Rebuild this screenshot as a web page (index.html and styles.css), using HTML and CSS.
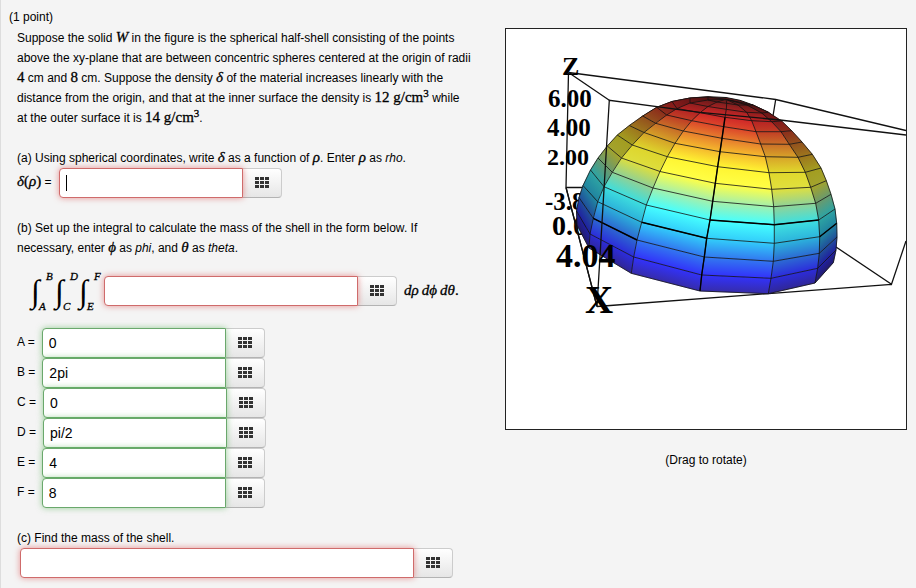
FILE: index.html
```html
<!DOCTYPE html>
<html lang="en">
  <head>
    <title>Mass of a spherical half-shell</title>
    <meta charset="utf-8">
    <link rel="stylesheet" href="styles.css">
  </head>
  <body>

  <svg class="defs" aria-hidden="true">
    <symbol id="keypad" viewBox="0 0 14 11">
      <path d="M0 0h4v3H0zM5 0h4v3H5zM10 0h4v3h-4zM0 4h4v3H0zM5 4h4v3H5zM10 4h4v3h-4zM0 8h4v3H0zM5 8h4v3H5zM10 8h4v3h-4z"/>
    </symbol>
  </svg>

  <form class="problem">
    <div class="points">(1 point)</div>

    <div class="columns">
      <div class="statement">
        <p>Suppose the solid <i class="math">W</i> in the figure is the spherical half-shell consisting of the points above the xy-plane that are between concentric spheres centered at the origin of radii <span class="math">4</span> cm and <span class="math">8</span> cm. Suppose the density <i class="math">δ</i> of the material increases linearly with the distance from the origin, and that at the inner surface the density is <span class="math">12 g/cm<sup>3</sup></span> while at the outer surface it is <span class="math">14 g/cm<sup>3</sup></span>.</p>

        <p>(a) Using spherical coordinates, write <i class="math">δ</i> as a function of <i class="math">ρ</i>. Enter <i class="math">ρ</i> as <em>rho</em>.</p>
        <div class="answer">
          <label for="density"><span class="math"><i>δ</i>(<i>ρ</i>)</span> =</label>
          <input class="wrong caret" id="density" type="text"><button type="button" aria-label="Equation editor"><svg class="icon"><use href="#keypad"/></svg></button>
        </div>

        <p>(b) Set up the integral to calculate the mass of the shell in the form below. If necessary, enter <i class="math">ϕ</i> as <em>phi</em>, and <i class="math">θ</i> as <em>theta</em>.</p>
        <div class="answer integral">
          <label for="integrand">
            <span class="int">∫</span><span class="limits"><i>B</i><i>A</i></span>
            <span class="int">∫</span><span class="limits"><i>D</i><i>C</i></span>
            <span class="int">∫</span><span class="limits"><i>F</i><i>E</i></span>
          </label>
          <input class="wrong medium" id="integrand" type="text"><button type="button" aria-label="Equation editor"><svg class="icon"><use href="#keypad"/></svg></button>
          <span class="math measure"><i>dρ</i>&thinsp;<i>dϕ</i>&thinsp;<i>dθ</i>.</span>
        </div>

        <div class="bounds">
          <div class="answer"><label for="a">A =</label><input class="right" id="a" type="text" value="0"><button type="button" aria-label="Equation editor"><svg class="icon"><use href="#keypad"/></svg></button></div>
          <div class="answer"><label for="b">B =</label><input class="right" id="b" type="text" value="2pi"><button type="button" aria-label="Equation editor"><svg class="icon"><use href="#keypad"/></svg></button></div>
          <div class="answer"><label for="c">C =</label><input class="right" id="c" type="text" value="0"><button type="button" aria-label="Equation editor"><svg class="icon"><use href="#keypad"/></svg></button></div>
          <div class="answer"><label for="d">D =</label><input class="right" id="d" type="text" value="pi/2"><button type="button" aria-label="Equation editor"><svg class="icon"><use href="#keypad"/></svg></button></div>
          <div class="answer"><label for="e">E =</label><input class="right" id="e" type="text" value="4"><button type="button" aria-label="Equation editor"><svg class="icon"><use href="#keypad"/></svg></button></div>
          <div class="answer"><label for="f">F =</label><input class="right" id="f" type="text" value="8"><button type="button" aria-label="Equation editor"><svg class="icon"><use href="#keypad"/></svg></button></div>
        </div>

        <p><label for="mass">(c) Find the mass of the shell.</label></p>
        <div class="answer total">
          <input class="wrong long" id="mass" type="text"><button type="button" aria-label="Equation editor"><svg class="icon"><use href="#keypad"/></svg></button>
        </div>
      </div>

      <div class="figure">
        <svg class="graph" viewBox="506 29 400 400">
          <!-- far edges of the box -->
          <path class="edge" d="M568.5 72.5L775.7 99.5L906 130.5M775.7 99.5L773 116M568.5 72.5L609.3 100.3M568.5 72.5L566 187.5L597 306.5M566 187.5H584M836 247L891.5 284.3L906 241M597 306.5L891.5 284.3"/>
          <text x="562" y="75" font-size="26">Z</text>
          <text x="548" y="107" font-size="25">6.00</text>
          <text x="547" y="136" font-size="25">4.00</text>
          <text x="547" y="165" font-size="24">2.00</text>
          <text x="545" y="210" font-size="25">-3.80</text>
          <text x="552" y="235" font-size="28">0.00</text>
          <path d="M640 118L657 107.3L672 101.5L690 98L708 96.7L726 97.5L740 100.3L753 105L768 112L780 121Z" fill="#65181a" stroke="#111"/>
          <g id="dome"></g>
          <path class="edge" d="M597 306.5L609.3 100.3L700 112.3L780 120L906 135M566 187.5L597 306.5"/>
          <text x="556" y="267" font-size="34">4.04</text>
          <text x="585" y="313" font-size="39">X</text>
        </svg>
        <div class="hint">(Drag to rotate)</div>
      </div>
    </div>
  </form>

  <script src="dome.js"></script>
  </body>
</html>
```
FILE: styles.css
```css
body {
  margin: 0;
  background: #f4f4f4;
  color: #000;
  font: 12px/20px "Liberation Sans", Arial, sans-serif;
}

.defs {
  display: none;
}

.problem {
  border-left: 1px solid #ddd;
  padding: 8px 9px 10px 8px;
}

.points {
  height: 20px;
  line-height: 18px;
}

.columns {
  display: grid;
  grid-template-columns: 1fr 402px;
  gap: 34px;
  padding-left: 8px;
}

p {
  margin: 0 0 20px;
}

/* formulas */
.math {
  font-family: "Liberation Serif", "Times New Roman", serif;
  font-size: 15px;
  line-height: 16px;
  white-space: nowrap;
  -webkit-text-stroke: 0.3px #000;
}
.math sup {
  font-size: 11px;
  line-height: 0;
  vertical-align: 5px;
}

/* answer boxes */
.answer {
  display: flex;
  align-items: center;
  margin-bottom: 20px;
}
.answer label {
  margin-right: 7px;
  padding-bottom: 2px;
}

p:has(+ .answer) {
  margin-bottom: 0;
}

input {
  box-sizing: border-box;
  width: 184px;
  height: 30px;
  margin: 0;
  padding: 4px 6px;
  border: 1px solid;
  border-radius: 4px 0 0 4px;
  background: #fff;
  color: #000;
  font: 14px/20px "Liberation Sans", Arial, sans-serif;
  position: relative;
  outline: 0;
}
.medium {
  width: 254px;
}
.long {
  width: 394px;
}
.wrong {
  border-color: #cf6b6b;
  box-shadow: 0 0 6px rgba(220, 80, 80, 0.6);
}
.right {
  border-color: #6aa86c;
  box-shadow: 0 0 6px rgba(90, 180, 90, 0.6);
}
.caret {
  background: linear-gradient(#000, #000) 6px 6px / 1px 16px no-repeat #fff;
}

button {
  display: flex;
  align-items: center;
  justify-content: center;
  box-sizing: border-box;
  width: 39px;
  height: 30px;
  padding: 0 0 2px;
  border: 1px solid #ccc;
  border-left: 0;
  border-bottom-color: #b3b3b3;
  border-radius: 0 4px 4px 0;
  background: linear-gradient(#fff, #e6e6e6);
}
.icon {
  width: 14px;
  height: 11px;
  fill: #333;
}

/* triple integral */
.integral {
  margin: 18px 0 22px 14px;
}
.integral label {
  display: flex;
  margin-right: 1px;
  padding: 0;
}
.int {
  width: 8px;
  height: 30px;
  font: italic 32px/30px "Liberation Serif", serif;
}
.limits {
  display: flex;
  flex-direction: column;
  justify-content: space-between;
  width: 16px;
  height: 42px;
  margin: -6px 0;
  font: 11px/12px "Liberation Serif", serif;
  -webkit-text-stroke: 0.3px #000;
}
.limits i:first-child {
  padding-left: 7px;
}
.measure {
  margin-left: 7px;
  padding-bottom: 2px;
}

.bounds {
  margin-bottom: 20px;
}
.bounds .answer {
  margin-bottom: 0;
}
.total {
  margin: 0 0 0 3px;
}

/* plot */
.graph {
  display: block;
  box-sizing: border-box;
  width: 402px;
  height: 402px;
  border: 1px solid #222;
  background: #fff;
  cursor: move;
}
.graph text {
  font-family: "Liberation Serif", "Times New Roman", serif;
  font-weight: bold;
}
.edge {
  fill: none;
  stroke: #111;
  stroke-width: 1.3;
}
.mesh {
  fill: none;
  stroke: #111;
  stroke-width: 0.8;
}
.heavy {
  fill: none;
  stroke: #000;
  stroke-width: 1.4;
}
.hint {
  margin-top: 20px;
  text-align: center;
}
```
FILE: dome.js
```js
var dome = document.getElementById('dome');

// projected meridians, each from the rim up to the pole
var meridians = [
  [[577,225],[576.5,211],[579,197.5],[583,185.5],[590.5,170],[598,158],[607.3,146],[617.3,135],[629.3,125.5],[642.7,116],[656.7,107.3],[672,101.5],[690,98],[708,97],[726,99.3]],
  [[589,248],[590,234],[593.3,218.3],[597.7,201.7],[604,186.7],[612.3,172.3],[621.5,158],[632.3,145],[644,132.5],[655.7,123.3],[666.7,115],[677,108.5],[690,103],[708,100],[726,99.3]],
  [[631.3,273.3],[633.7,257],[637,240],[641.7,222.3],[646.3,205],[653,188],[660,171.5],[667.3,156.7],[675,143.3],[683.3,131],[691.7,120.7],[700,112.7],[708,106.5],[717,102],[726,99.3]],
  [[700,291],[701.7,275],[704.3,257],[706.7,238.3],[710,220],[712.7,201.3],[715.3,183.3],[717.7,166.7],[720,151.7],[722,138.3],[723.7,126.7],[725,117.3],[726.3,109.3],[726.7,103.3],[726,99.3]],
  [[768.3,293.7],[771,278.3],[773.3,261.3],[774.3,243.3],[774.3,224.7],[773.7,206.7],[771.7,189.3],[769,172.7],[765.3,156.7],[760.7,144],[756,131.7],[751.7,120.7],[746.7,112.3],[738,105],[726,99.3]],
  [[815,283],[817.7,268.3],[819.3,253.3],[819.7,236.7],[818.7,220],[815.7,203.3],[810.7,187.3],[805.3,172.3],[798,157.3],[789.3,144.3],[781,131.7],[771.7,121.7],[761.7,113],[747,105],[726,99.3]],
  [[833.3,262.7],[836,250],[837,237],[836.7,223.3],[835,209],[831,194.3],[826.3,180.7],[821,168],[812.3,154.3],[802,142],[791.7,130.7],[781.7,121],[768.3,112.3],[753,105],[726,99.3]]
];

var colors = [
  [54,44,170], [50,50,250], [50,120,240], [50,205,250], [70,255,255],
  [165,240,170], [255,255,70], [255,245,50], [245,185,45], [230,125,45],
  [220,70,42], [208,40,40], [165,34,34], [125,30,30], [100,26,26]
];

var shades = [0.64, 0.87, 1, 1, 0.88, 0.64];

function add(parent, name, attrs) {
  var el = document.createElementNS('http://www.w3.org/2000/svg', name);
  for (var key in attrs) {
    el.setAttribute(key, attrs[key]);
  }
  parent.appendChild(el);
  return el;
}

function shade(color, k) {
  return 'rgb(' + color.map(function(v) { return Math.round(v * k); }).join(',') + ')';
}

for (var c = 0; c < shades.length; c++) {
  for (var r = 0; r < colors.length - 1; r++) {
    var a = meridians[c][r], b = meridians[c + 1][r];
    var d = meridians[c][r + 1], e = meridians[c + 1][r + 1];

    // gradient runs square to the lower edge of the facet
    var mx = (a[0] + b[0]) / 2, my = (a[1] + b[1]) / 2;
    var nx = b[1] - a[1], ny = a[0] - b[0];
    var t = (((d[0] + e[0]) / 2 - mx) * nx + ((d[1] + e[1]) / 2 - my) * ny) / (nx * nx + ny * ny);
    var id = 'f' + c + '-' + r;
    var grad = add(dome, 'linearGradient', {
      id: id, gradientUnits: 'userSpaceOnUse',
      x1: mx, y1: my, x2: mx + nx * t, y2: my + ny * t
    });
    add(grad, 'stop', {offset: 0, 'stop-color': shade(colors[r], shades[c])});
    add(grad, 'stop', {offset: 1, 'stop-color': shade(colors[r + 1], shades[c])});
    add(dome, 'polygon', {
      points: [a, b, e, d].join(' '),
      fill: 'url(#' + id + ')', stroke: 'url(#' + id + ')', 'stroke-width': 0.5
    });
  }
}

meridians.forEach(function(line) {
  add(dome, 'polyline', {'class': 'mesh', points: line.join(' ')});
});
for (var i = 0; i < colors.length - 1; i++) {
  var ring = meridians.map(function(line) { return line[i]; });
  add(dome, 'polyline', {'class': 'mesh', points: ring.join(' ')});
}

// coordinate planes cut the surface along these
add(dome, 'polyline', {'class': 'heavy', points: meridians[3].slice(0, 12).join(' ')});
[[1, 2, 2], [2, 3, 3], [3, 4, 4], [4, 5, 4], [5, 6, 3]].forEach(function(s) {
  add(dome, 'polyline', {'class': 'heavy', points: [meridians[s[0]][s[2]], meridians[s[1]][s[2]]].join(' ')});
});
```
